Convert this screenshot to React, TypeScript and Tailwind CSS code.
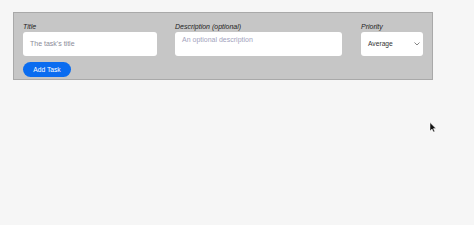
import React from "react";

export default function App() {
  return (
    <div
      className="w-[474px] h-[225px] bg-[#f6f6f6] pt-[12px] pl-[13px]"
      style={{ fontFamily: '"Liberation Sans", Arial, sans-serif' }}
    >
      <div className="w-[420px] h-[68px] bg-[#c6c6c6] border border-[#a9a9a9] px-[9px] pt-[9px]">
        <div className="flex gap-[18px]">
          <div className="flex flex-col w-[134px]">
            <span className="italic text-[7px] leading-[10px] text-[#222]">Title</span>
            <div className="h-[24px] rounded-[3px] bg-white flex items-center pl-[7px] text-[7px] text-[#8b8b98]">
              The task's title
            </div>
          </div>
          <div className="flex flex-col w-[167px]">
            <span className="italic text-[7px] leading-[10px] text-[#222]">Description (optional)</span>
            <div className="h-[24px] rounded-[3px] bg-white pl-[7px] pt-[3px] text-[7px] leading-[10px] text-[#a3a3bd]">
              An optional description
            </div>
          </div>
          <div className="flex flex-col w-[62px] ml-[1px]">
            <span className="italic text-[7px] leading-[10px] text-[#222]">Priority</span>
            <div className="h-[24px] rounded-[3px] bg-white flex items-center justify-between pl-[7px] pr-[3px] text-[6.7px] text-[#333]">
              <span>Average</span>
              <svg width="6" height="4" viewBox="0 0 6 4" fill="none">
                <path d="M0.5 0.5 L3 3 L5.5 0.5" stroke="#777" strokeWidth="0.9" />
              </svg>
            </div>
          </div>
        </div>
        <button className="mt-[6px] h-[15px] w-[48px] rounded-full bg-[#0a6cf0] text-white text-[6.7px] leading-[15px] flex items-center justify-center">
          Add Task
        </button>
      </div>
      <div className="relative">
        <svg className="absolute left-[416px] top-[42px]" width="8" height="11" viewBox="0 0 8 11">
          <path d="M1 0.5 L1 9 L3 7 L4.5 10 L5.8 9.4 L4.4 6.6 L7 6.6 Z" fill="#111" stroke="#fff" strokeWidth="0.5" />
        </svg>
      </div>
    </div>
  );
}
